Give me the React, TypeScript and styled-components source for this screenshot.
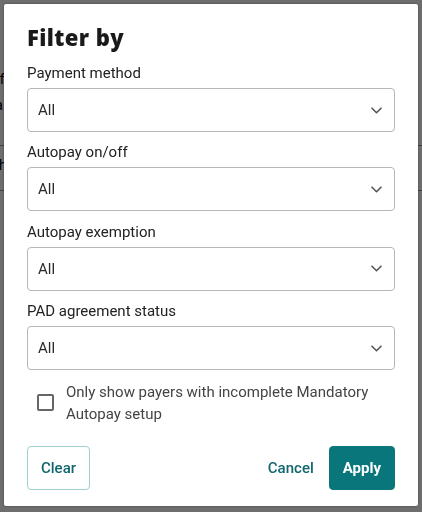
import { FC } from 'react';
import styled, { createGlobalStyle } from 'styled-components';

const GlobalStyle = createGlobalStyle`
  html, body {
    margin: 0;
    padding: 0;
    background: #ffffff;
  }
  body {
    font-family: Roboto, "Liberation Sans", Arial, sans-serif;
    -webkit-font-smoothing: antialiased;
  }
  * { box-sizing: border-box; }
`;

const FILTERS = [
  { label: 'Payment method', value: 'All' },
  { label: 'Autopay on/off', value: 'All' },
  { label: 'Autopay exemption', value: 'All' },
  { label: 'PAD agreement status', value: 'All' },
];

const ChevronDown: FC = () => (
  <svg width="11" height="7" viewBox="0 0 11 7" fill="none">
    <path d="M1 1.2 5.5 5.7 10 1.2" stroke="#555" strokeWidth="1.6" strokeLinecap="round" strokeLinejoin="round" />
  </svg>
);

export default function App() {
  return (
    <>
      <GlobalStyle />
      <BehindPage>
        <BehindRow top={70}><span>of</span><span>r</span></BehindRow>
        <BehindRow top={96}><span>ia</span><span /></BehindRow>
        <BehindRule top={145} />
        <BehindRow top={156}><span>ch</span><span /></BehindRow>
        <BehindRule top={190} />
        <BehindRow top={252}><span /><span>r</span></BehindRow>
      </BehindPage>
      <Overlay>
        <Modal>
          <Title>Filter by</Title>
          <Fields>
            {FILTERS.map(f => (
              <Field key={f.label}>
                <Label>{f.label}</Label>
                <SelectBox>
                  <span>{f.value}</span>
                  <ChevronDown />
                </SelectBox>
              </Field>
            ))}
          </Fields>
          <CheckRow>
            <CheckBox />
            <CheckText>Only show payers with incomplete Mandatory Autopay setup</CheckText>
          </CheckRow>
          <Footer>
            <OutlineButton>Clear</OutlineButton>
            <RightActions>
              <TextButton>Cancel</TextButton>
              <PrimaryButton>Apply</PrimaryButton>
            </RightActions>
          </Footer>
        </Modal>
      </Overlay>
    </>
  );
}

const BehindPage = styled.div`
  position: relative;
  width: 422px;
  height: 512px;
  overflow: hidden;
  background: #fff;
  font-family: Roboto, "Liberation Sans", sans-serif;
  font-size: 15px;
  color: #000;
`;

const BehindRow = styled.div<{ top: number }>`
  position: absolute;
  top: ${p => p.top}px;
  left: -9px;
  right: -9px;
  display: flex;
  justify-content: space-between;
`;

const BehindRule = styled.div<{ top: number }>`
  position: absolute;
  top: ${p => p.top}px;
  left: 0;
  right: 0;
  height: 1px;
  background: #9a9a9a;
`;

const Overlay = styled.div`
  position: fixed;
  inset: 0;
  background: rgba(0, 0, 0, 0.57);
  padding: 4px;
`;

const Modal = styled.div`
  width: 414px;
  height: 502px;
  background: #fff;
  border-radius: 2px;
  box-shadow: 0 0 3px rgba(0, 0, 0, 0.35);
  padding: 19px 23px 16px 23px;
  display: flex;
  flex-direction: column;
`;

const Title = styled.h2`
  margin: 0;
  font-family: "Open Sans", "DejaVu Sans", sans-serif;
  font-weight: 800;
  font-size: 22px;
  line-height: 28px;
  color: #1a1a1a;
  letter-spacing: 0.4px;
`;

const Fields = styled.div`
  margin-top: 12px;
  display: flex;
  flex-direction: column;
  gap: 10.4px;
`;

const Field = styled.div`
  display: flex;
  flex-direction: column;
  gap: 5px;
`;

const Label = styled.div`
  font-size: 15px;
  line-height: 20px;
  color: #222;
`;

const SelectBox = styled.div`
  height: 44px;
  border: 1px solid #b7b7b7;
  border-radius: 4px;
  padding: 0 12px 0 10px;
  display: flex;
  align-items: center;
  justify-content: space-between;
  font-size: 15px;
  color: #2a2a2a;
`;

const CheckRow = styled.div`
  margin-top: 11px;
  padding-left: 10px;
  display: flex;
  align-items: center;
  gap: 12px;
`;

const CheckBox = styled.div`
  flex: none;
  width: 17px;
  height: 17px;
  border: 2px solid #666;
  border-radius: 2px;
  margin-top: -2px;
`;

const CheckText = styled.div`
  font-size: 15px;
  line-height: 22px;
  color: #444;
`;

const Footer = styled.div`
  margin-top: 21px;
  display: flex;
  justify-content: space-between;
  align-items: center;
`;

const RightActions = styled.div`
  display: flex;
  align-items: center;
  gap: 3px;
`;

const BaseButton = styled.button`
  height: 44px;
  border-radius: 4px;
  font-family: Roboto, "Liberation Sans", sans-serif;
  font-size: 15px;
  font-weight: 500;
  cursor: pointer;
`;

const OutlineButton = styled(BaseButton)`
  padding: 0 13px;
  background: #fff;
  border: 1px solid #9fcfd1;
  color: #11676d;
`;

const TextButton = styled(BaseButton)`
  padding: 0 12px;
  background: transparent;
  border: none;
  color: #11676d;
`;

const PrimaryButton = styled(BaseButton)`
  padding: 0 13px;
  background: #08767b;
  border: 1px solid #08767b;
  color: #fff;
  font-weight: 700;
`;
